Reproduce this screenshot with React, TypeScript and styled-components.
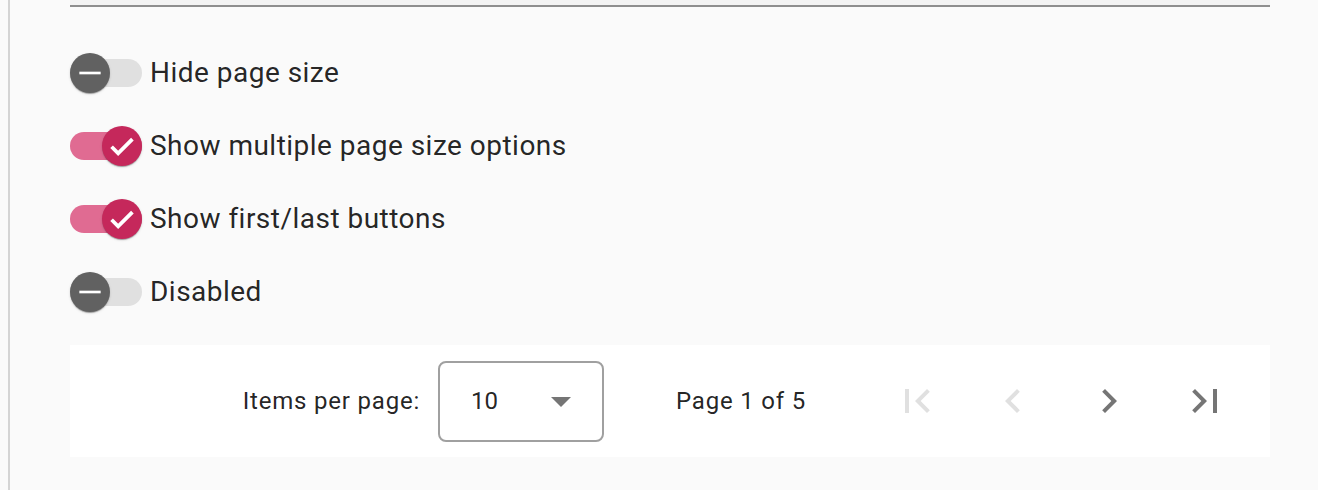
import styled, {createGlobalStyle} from "styled-components";

const GlobalStyle = createGlobalStyle`
  html, body {
    margin: 0;
    padding: 0;
    background: #fafafa;
  }
  body {
    font-family: Roboto, "Noto Sans", "Liberation Sans", sans-serif;
    color: rgba(0, 0, 0, 0.87);
  }
`

const Page = styled.div`
  margin-left: 8px;
  border-left: 2px solid #d4d4d4;
  min-height: 490px;
  box-sizing: border-box;
  padding: 0 48px 0 60px;
`

const FieldBottom = styled.div`
  width: 1200px;
  height: 5px;
  background: #f3f3f3;
  border-bottom: 2px solid #8e8e8e;
`

const ToggleList = styled.div`
  display: flex;
  flex-direction: column;
  gap: 33px;
  padding-top: 46px;
`

const ToggleRow = styled.label`
  display: flex;
  align-items: center;
  height: 40px;
  cursor: pointer;
`

const Switch = styled.span`
  position: relative;
  display: inline-flex;
  align-items: center;
  width: 72px;
  height: 40px;
  flex-shrink: 0;
`

const Track = styled.span<{ $on: boolean }>`
  width: 72px;
  height: 28px;
  border-radius: 14px;
  background: ${p => p.$on ? "#e06b92" : "#e0e0e0"};
`

const Thumb = styled.span<{ $on: boolean }>`
  position: absolute;
  top: 0;
  left: ${p => p.$on ? "32px" : "0"};
  width: 40px;
  height: 40px;
  border-radius: 50%;
  background: ${p => p.$on ? "#c5285b" : "#616161"};
  box-shadow: 0 2px 1px -1px rgba(0, 0, 0, .2), 0 1px 1px 0 rgba(0, 0, 0, .14), 0 1px 3px 0 rgba(0, 0, 0, .12);
  display: flex;
  align-items: center;
  justify-content: center;

  svg {
    width: 32px;
    height: 32px;
    fill: #fff;
  }
`

const ToggleLabel = styled.span`
  padding-left: 8px;
  font-size: 28px;
  letter-spacing: 0.48px;
  line-height: 40px;
  color: rgba(0, 0, 0, 0.87);
`

const Paginator = styled.div`
  margin-top: 33px;
  width: 1200px;
  height: 112px;
  background: #fff;
  display: flex;
  align-items: center;
  justify-content: flex-end;
  padding: 0 17px 0 16px;
  box-sizing: border-box;
  font-size: 24px;
  letter-spacing: 0.8px;
  color: rgba(0, 0, 0, 0.87);
`

const PageSize = styled.div`
  display: flex;
  align-items: center;
  flex-shrink: 0;
  margin-right: 24px;
`

const PageSizeLabel = styled.span`
  margin-right: 18px;
  white-space: nowrap;
`

const Select = styled.div`
  width: 166px;
  height: 81px;
  flex-shrink: 0;
  box-sizing: border-box;
  border: 2px solid #a0a0a0;
  border-radius: 8px;
  display: flex;
  align-items: center;
  justify-content: space-between;
  padding: 0 31px 0 31px;
`

const SelectValue = styled.span`
  letter-spacing: 0;
`

const Arrow = styled.span`
  width: 0;
  height: 0;
  border-left: 10px solid transparent;
  border-right: 10px solid transparent;
  border-top: 10px solid #757575;
  margin-top: 2px;
`

const RangeLabel = styled.span`
  margin: 0 63px 0 48px;
  letter-spacing: 0.8px;
  white-space: nowrap;
  flex-shrink: 0;
`

const NavButton = styled.button<{ $disabled?: boolean }>`
  width: 96px;
  height: 96px;
  flex-shrink: 0;
  border: none;
  background: transparent;
  padding: 0;
  display: flex;
  align-items: center;
  justify-content: center;
  cursor: ${p => p.$disabled ? "default" : "pointer"};

  svg {
    width: 48px;
    height: 48px;
    fill: ${p => p.$disabled ? "#e0e0e0" : "#757575"};
  }
`

const toggles = [
    {label: "Hide page size", on: false},
    {label: "Show multiple page size options", on: true},
    {label: "Show first/last buttons", on: true},
    {label: "Disabled", on: false},
]

function Toggle({label, on}: { label: string, on: boolean }) {
    return (
        <ToggleRow>
            <Switch>
                <Track $on={on}/>
                <Thumb $on={on}>
                    {on ? (
                        <svg viewBox="0 0 24 24">
                            <path d="M4.2 12.6l4.9 4.9L19.8 6.8" fill="none" stroke="#fff" strokeWidth="2.8"/>
                        </svg>
                    ) : (
                        <svg viewBox="0 0 24 24"><path d="M20 13H4v-2h16v2z"/></svg>
                    )}
                </Thumb>
            </Switch>
            <ToggleLabel>{label}</ToggleLabel>
        </ToggleRow>
    )
}

export default function App() {
    return (
        <>
            <GlobalStyle/>
            <Page>
                <FieldBottom/>
                <ToggleList>
                    {toggles.map(t => <Toggle key={t.label} label={t.label} on={t.on}/>)}
                </ToggleList>
                <Paginator>
                    <PageSize>
                        <PageSizeLabel>Items per page:</PageSizeLabel>
                        <Select>
                            <SelectValue>10</SelectValue>
                            <Arrow/>
                        </Select>
                    </PageSize>
                    <RangeLabel>Page 1 of 5</RangeLabel>
                    <NavButton $disabled aria-label="First page">
                        <svg viewBox="0 0 24 24"><path d="M18.41 16.59L13.82 12l4.59-4.59L17 6l-6 6 6 6zM6 6h2v12H6z"/></svg>
                    </NavButton>
                    <NavButton $disabled aria-label="Previous page">
                        <svg viewBox="0 0 24 24"><path d="M15.41 7.41L14 6l-6 6 6 6 1.41-1.41L10.83 12z"/></svg>
                    </NavButton>
                    <NavButton aria-label="Next page">
                        <svg viewBox="0 0 24 24"><path d="M10 6L8.59 7.41 13.17 12l-4.58 4.59L10 18l6-6z"/></svg>
                    </NavButton>
                    <NavButton aria-label="Last page">
                        <svg viewBox="0 0 24 24"><path d="M5.59 7.41L10.18 12l-4.59 4.59L7 18l6-6-6-6zM16 6h2v12h-2z"/></svg>
                    </NavButton>
                </Paginator>
            </Page>
        </>
    )
}
